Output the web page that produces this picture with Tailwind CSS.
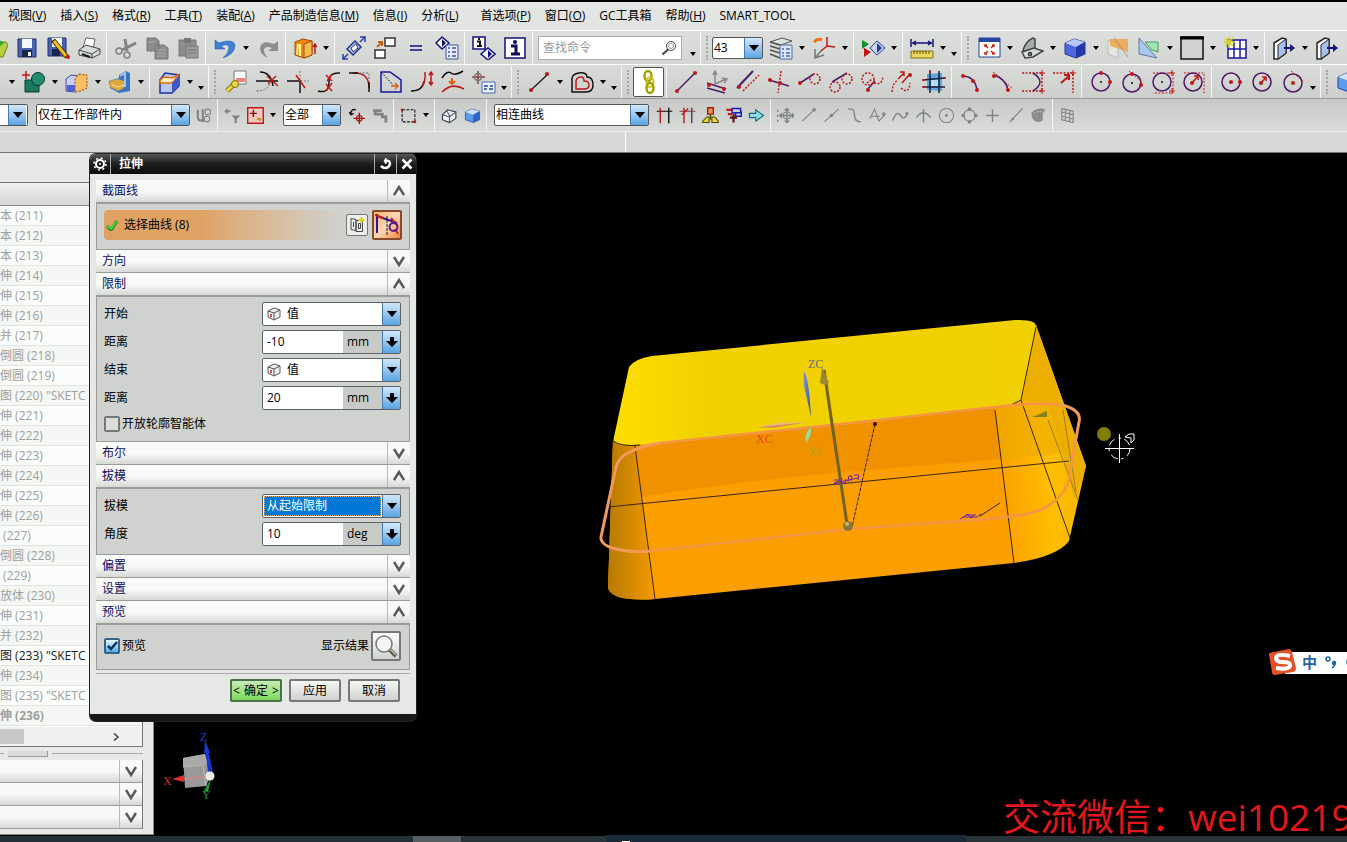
<!DOCTYPE html>
<html lang="zh-CN">
<head>
    <meta charset="UTF-8">
    <meta name="viewport" content="width=device-width, initial-scale=1.0">
    <title>拉伸</title>
    <script src="https://cdn.jsdelivr.net/npm/@tailwindcss/browser@4"></script>
</head>
<body class="h-screen flex flex-col overflow-hidden bg-black font-['Open_Sans','Noto_Sans_CJK_SC',sans-serif] text-xs text-black">

    <header class="shrink-0 overflow-hidden border-t-2 border-black bg-[#d6d9d6] whitespace-nowrap">
        <!-- Menu -->
        <nav class="flex h-7 items-center gap-3.5 bg-[#e2e5e2] pl-2 leading-6">
            <a href="#">视图(<u>V</u>)</a>
            <a href="#">插入(<u>S</u>)</a>
            <a href="#">格式(<u>R</u>)</a>
            <a href="#">工具(<u>T</u>)</a>
            <a href="#">装配(<u>A</u>)</a>
            <a href="#">产品制造信息(<u>M</u>)</a>
            <a href="#">信息(<u>I</u>)</a>
            <a href="#" class="mr-2">分析(<u>L</u>)</a>
            <a href="#">首选项(<u>P</u>)</a>
            <a href="#">窗口(<u>O</u>)</a>
            <a href="#">GC工具箱</a>
            <a href="#">帮助(<u>H</u>)</a>
            <a href="#">SMART_TOOL</a>
        </nav>

        <!-- Standard toolbar -->
        <div class="flex h-[34px] items-center border-t border-white bg-linear-to-b from-[#dcdfdc] to-[#d3d6d3]">
            <div class="-ml-5 flex items-center" data-tools="open save saveas print | cut copy paste | undo v redo | extrude v | iso boxes equals difflist | idiff info |"></div>
            <form class="mx-0.5 flex h-6 w-36 shrink-0 items-center border border-[#aaadaa] bg-white pr-1" role="search">
                <input type="search" aria-label="查找命令" placeholder="查找命令" class="min-w-0 flex-1 pl-1 placeholder-[#999] outline-none">
                <svg class="size-4" viewBox="0 0 16 16" fill="none" stroke="#444"><circle cx="10" cy="6" r="4.500"/><circle cx="10" cy="6" r="2.500" stroke="#999"/><path d="M7 9.500 1.500 14.500" stroke-width="2"/></svg>
            </form>
            <div class="flex items-center" data-tools="gap o | :"></div>
            <label class="flex h-[22px] w-[51px] shrink-0 overflow-hidden rounded-xs border border-[#555] bg-white">
                <select aria-label="工作图层" class="w-8 appearance-none pl-px outline-none"><option>43</option></select>
                <span data-arrow="combo"></span>
            </label>
            <div class="ml-0.5 flex items-center" data-tools="layers v csys v | play v | ruler v o | : fit v shade v cube v clip section v frame v grid v | door v door greenbar"></div>
        </div>

        <!-- Feature and curve toolbar -->
        <div class="flex h-[34px] items-center border-t border-white bg-linear-to-b from-[#d8dbd8] to-[#cccfcc]">
            <div class="flex items-center pl-1.5" data-tools="v datum v block v draft v | shell v o | : wrench trimA trimB trimC fillet chamfer offset project point o | : line v profile v o | : chain | segment axes parallel cross tan1 tan2 tan3 tan4 mesh | arc1 arc2 arc3 arc4 | circ1 circ2 circ3 circ4 | circ5 circ6 circ7 o | : slab"></div>
        </div>

        <!-- Selection bar -->
        <div class="flex h-[33px] items-center border-t border-[#999c99] bg-linear-to-b from-[#c6c9c6] to-[#d9dcd9]">
            <label class="flex h-[22px] w-7 shrink-0 overflow-hidden rounded-r-xs border border-l-0 border-[#555] bg-white">
                <select aria-label="类型过滤器" class="w-2 appearance-none outline-none"><option></option></select>
                <span data-arrow="combo"></span>
            </label>
            <label class="ml-2 flex h-[22px] w-[154px] shrink-0 overflow-hidden rounded-xs border border-[#555] bg-white">
                <select aria-label="选择范围" class="min-w-0 flex-1 appearance-none pl-px outline-none"><option>仅在工作部件内</option></select>
                <span data-arrow="combo"></span>
            </label>
            <div class="flex items-center pl-0.5" data-small data-tools="gchain | funnel snapbox v"></div>
            <label class="ml-1 flex h-[22px] w-[58px] shrink-0 overflow-hidden rounded-xs border border-[#555] bg-white">
                <select aria-label="细节过滤" class="min-w-0 flex-1 appearance-none pl-px outline-none"><option>全部</option></select>
                <span data-arrow="combo"></span>
            </label>
            <div class="flex items-center pl-1" data-small data-tools="snapto hook | marquee v | wirecube slab |"></div>
            <label class="ml-1 flex h-[22px] w-[155px] shrink-0 overflow-hidden rounded-xs border border-[#555] bg-white">
                <select aria-label="曲线规则" class="min-w-0 flex-1 appearance-none pl-px outline-none"><option>相连曲线</option></select>
                <span data-arrow="combo"></span>
            </label>
            <div class="flex items-center pl-1" data-small data-tools="stopA stopB tree flow arrow | move g1 g2 g3 g4 g5 g6 g7 g8 g9 g10 g11 | g12"></div>
        </div>

        <!-- Cue and status line -->
        <div class="flex h-[22px] border-t border-b border-t-[#eceeec] border-b-[#777] bg-[#d6d9d6]">
            <div class="w-[626px] border-r border-white"></div>
        </div>
    </header>

    <main class="relative flex min-h-0 flex-1">
        <!-- Part navigator -->
        <aside class="flex w-[154px] shrink-0 flex-col overflow-hidden border-r border-b border-[#888] bg-[#e6e9e6]">
            <div class="mr-2.5 h-[30px] shrink-0 border-b border-[#777]"></div>
            <div class="mr-2.5 h-[23px] shrink-0 border-b border-[#888] bg-linear-to-b from-[#f0f2f0] to-[#d4d7d4]"></div>
            <ul id="history" class="mr-2.5 h-[521px] shrink-0 overflow-hidden border-r border-[#777] bg-[#fbfdfb] whitespace-nowrap text-[#9da09d]"></ul>
            <div class="mr-2.5 flex h-5 shrink-0 items-center border-r border-b border-[#777] bg-[#eff1ef]">
                <div class="h-[15px] w-6 bg-[#c6c8c6]"></div>
                <svg class="mr-[22px] ml-auto size-2" viewBox="0 0 8 8" fill="none" stroke="#444" stroke-width="1.600"><path d="M2 .5 6 4 2 7.500"/></svg>
            </div>
            <div class="mr-2.5 flex h-[13px] shrink-0 items-center gap-1">
                <div class="h-px w-1 bg-[#aaa]"></div>
                <div class="h-1.5 w-10 border-r border-b border-[#999] bg-[#dadcda]"></div>
                <div class="h-px flex-1 bg-[#aaa]"></div>
            </div>
            <div class="mr-2.5 flex flex-col border-r border-[#777]">
                <button class="flex h-[23px] items-center justify-end" aria-label="相关性" data-panel></button>
                <button class="flex h-[23px] items-center justify-end" aria-label="细节" data-panel></button>
                <button class="flex h-[23px] items-center justify-end" aria-label="预览面板" data-panel></button>
            </div>
        </aside>

        <!-- Graphics window -->
        <section class="relative min-w-0 flex-1 overflow-hidden bg-black">
            <svg class="absolute top-0 left-0 h-[682px] w-[1193px]" viewBox="154 153 1193 682" fill="none">
                <defs>
                    <linearGradient id="leftCorner"><stop offset="0" stop-color="#b87900"/><stop offset=".3" stop-color="#c98300"/><stop offset="1" stop-color="#f69a00"/></linearGradient>
                    <linearGradient id="rightCorner" x1="0" x2="1" y1=".2" y2="0"><stop offset="0" stop-color="#fca200"/><stop offset=".5" stop-color="#ffbe00"/><stop offset="1" stop-color="#f2b400"/></linearGradient>
                    <linearGradient id="topFace"><stop offset="0" stop-color="#ffde00"/><stop offset=".2" stop-color="#f1d200"/><stop offset="1" stop-color="#f0d000"/></linearGradient>
                    <linearGradient id="blueCone"><stop offset="0" stop-color="#7a98e8"/><stop offset="1" stop-color="#3c5490"/></linearGradient>
                </defs>
                <!-- Drafted body -->
                <path d="M613 440Q620 447 636 445L870 416 1000 400 1060 540 1014 563 655 599Q612 602 608 588Z" fill="#fb9e00"/>
                <path d="M613 440Q620 447 636 445L655 599Q612 602 608 588Z" fill="url(#leftCorner)"/>
                <path d="M995 404 1021 398 1036 325 1086 466 1069 541Q1057 557 1014 563Z" fill="url(#rightCorner)"/>
                <path d="M1021 400 1036 325 1086 466 1075 500 1050 408Z" fill="#eeb000"/>
                <path d="M636 445 870 416 995 402 1001 459 870 470Q740 480 641 497Z" fill="#f09200"/>
                <path d="M995 410 1050 404 1070 452 1001 459Z" fill="#e8a900" opacity=".5"/>
                <path d="M629 367Q634 359 652 356L1015 320Q1037 319 1036 327L1021 400 1011 406 870 420 650 444Q610 448 614 437Z" fill="url(#topFace)"/>
                <!-- Edges -->
                <g stroke="#3a2800" stroke-width="1">
                    <path d="M613 441Q622 447 640 445M635 446 655 599M608 507 1069 461M995 410 1014 563M1036 327 1021 400 1070 538M1021 400 1011 405"/>
                    <path d="M1048 420 1078 500M1063 410 1076 492" stroke="#a17c2c"/>
                    <path d="M875 424 852 527" stroke-dasharray="4 1"/>
                    <path d="m980 516 20-13"/>
                </g>
                <!-- Section curve -->
                <path d="M1062 405Q1082 410 1079 422L1075 444M650 551Q630 553 612 548 600 544 601 537L616 467Q619 458 626 454 640 446 660 443" stroke="#f29a5a" stroke-width="3"/>
                <path d="M660 443 870 421Q930 414 1005 406 1040 402 1062 405M1075 444 1069 480Q1060 508 1022 515 990 520 930 523L850 529 650 551" stroke="#f59644" stroke-width="2.500"/>
                <!-- Direction handle and work axes -->
                <path d="M824 370 847 524" stroke="#716224" stroke-width="3"/>
                <path d="m822 367 7 16-4 2-5-2Z" fill="#9a8636"/>
                <circle cx="848" cy="526" r="5" fill="#8a7838"/><circle cx="847" cy="524" r="2" fill="#c8b878"/>
                <circle cx="875" cy="424" r="2" fill="#400"/>
                <path d="M804 371q5 8 7 46l-4-18q-5-17-3-28Z" fill="url(#blueCone)"/>
                <path d="m757 427 51-5-35 6Z" fill="#d98963"/><path d="m757 427 51-5-30 1Z" fill="#ecb48c"/>
                <path d="m811 427q1 8-5 16-2-9 5-16Z" fill="#8fe0a0"/>
                <path d="m1032 417 15-6v6Z" fill="#88801c"/>
                <g stroke="#7020b0"><path d="M834 480h5l-5 4h6M842 478l-1 5h4l1-4M848 482l1-6h3l-1 5M854 475h5l-1 5M834 483l24-5"/><path d="m960 519 8-5 3 4 5-4M963 517h14l4-3M966 515h8"/></g>
                <g font-family="Liberation Serif, serif" font-size="12">
                    <text x="808" y="368" fill="#6b6788">ZC</text>
                    <text x="756" y="443" fill="#e04a12">XC</text>
                    <text x="808" y="455" fill="#a4a418">Yc</text>
                </g>
                <!-- Cursor -->
                <circle cx="1104" cy="434" r="7" fill="#7f8000"/>
                <g stroke="#fff"><path d="M1105 448.500h29M1119.500 434v29"/><circle cx="1119.500" cy="448.500" r="10.500" stroke-dasharray="8 4 3 3"/><path d="m1125 437 4-3h5v6l-3 3v-5Z"/></g>
                <!-- View triad -->
                <path d="m183 758 22-4 6 21-5 11-21 2Z" fill="#999"/><path d="m183 758 22-4 3 10-25 3Z" fill="#aaa"/><path d="m183 767 20-2 3 21" stroke="#bbb"/>
                <path d="M184 779 206 777" stroke="#e77"/><path d="m172 779 12-4v7Z" fill="#e03030"/>
                <path d="m206 745 6 28h-3Z" stroke="#1838d0" stroke-width="2"/><path d="m205 740 5 13h-6Z" fill="#1838d0"/>
                <path d="m211 778-3 14-4-1Z" fill="#20a030"/><circle cx="210" cy="776" r="4.500" fill="#e8eee8"/>
                <g font-family="Liberation Serif, serif" font-size="12">
                    <text x="200" y="741" fill="#2038d8">Z</text>
                    <text x="163" y="785" fill="#d02838">X</text>
                    <text x="202" y="799" fill="#20902c">Y</text>
                </g>
            </svg>

            <!-- Input method bar -->
            <div class="absolute top-[495px] right-0 flex h-7 w-[79px] items-center text-[#1f66a8]">
                <div class="absolute top-1 right-0 h-[22px] w-[62px] bg-white"></div>
                <svg class="relative size-7 shrink-0" viewBox="0 0 28 28"><path d="m1 5 20-4q2 0 3 3l4 16q0 3-3 4L7 27q-3 0-3-3L1 7Z" fill="#e2502a"/><path d="M22 8Q9 5 8 10q0 4 7 4 8 0 7 4-2 4-14 2" fill="none" stroke="#fff" stroke-width="4"/></svg>
                <span class="relative ml-1.5 text-[15px] font-bold">中</span>
                <svg class="relative ml-2 h-4 w-6 shrink-0" viewBox="0 0 24 16" fill="none" stroke="#1f66a8" stroke-width="1.500"><circle cx="3" cy="5" r="2"/><circle cx="9" cy="9" r="1.500" fill="#1f66a8"/><path d="M10 9q0 3-3 5M24 3q-4 5 0 10"/></svg>
            </div>

            <p class="absolute bottom-0 left-[849px] text-[37px] leading-9 whitespace-nowrap text-[#e3171b]">交流微信：wei10219</p>
        </section>

        <!-- Extrude dialog -->
        <form class="absolute top-px left-[90px] flex w-[326px] flex-col rounded-t-md rounded-b-md border-b-[7px] border-[#151817] bg-[#e6e8e6] shadow-[0_0_0_1px_#222]" role="dialog" aria-label="拉伸">
            <div class="flex h-5 items-center rounded-t-md bg-linear-to-b from-[#555856] via-[#1b1e1c] to-[#0c0e0d] text-white">
                <svg class="mx-[3px] size-3.5" viewBox="0 0 14 14" fill="none" stroke="#fff"><circle cx="7" cy="7" r="4" stroke-width="2"/><circle cx="7" cy="7" r="6" stroke-width="1.500" stroke-dasharray="2 2.700"/><circle cx="7" cy="7" r="1" fill="#fff" stroke="none"/></svg>
                <h2 class="flex-1 border-l border-[#aaa] pl-2 leading-5 font-bold">拉伸</h2>
                <button type="button" aria-label="重置" class="flex h-5 w-[22px] items-center justify-center border-l border-[#aaa]"><svg class="size-3" viewBox="0 0 12 12" fill="none" stroke="#fff" stroke-width="2.500"><path d="M6 3q4-1 4 3-1 4-5 4-2 0-4-2"/><path d="M6 0v6L4 3Z" fill="#fff" stroke-width="1"/></svg></button>
                <button type="button" aria-label="关闭" class="flex h-5 w-5 items-center justify-center border-l border-[#aaa]"><svg class="size-3" viewBox="0 0 12 12" fill="none" stroke="#fff" stroke-width="2.500"><path d="m1.500 1.500 9 9M10.500 1.500l-9 9"/></svg></button>
            </div>

            <div class="mx-1.5 mt-1.5 flex flex-col">
                <button type="button" class="flex h-[23px] items-center justify-between text-[#0c0c64]" data-panel="open">截面线</button>
                <div class="flex h-[47px] items-center gap-1 border border-[#9a9d9a] bg-[#cfd2cf] px-[7px] pb-1">
                    <div class="flex h-[30px] flex-1 items-center gap-1 rounded-sm bg-linear-to-r from-[#dfa263] from-40% to-[#cfd2cf]">
                        <svg class="ml-0.5 size-3" viewBox="0 0 12 12" fill="none"><path d="m1 7 4 4 6-9" stroke="#167a16" stroke-width="3"/><path d="m1 7 4 3 6-8" stroke="#3cd83c" stroke-width="2"/></svg>
                        <span class="pl-0.5">选择曲线 (8)</span>
                    </div>
                    <button type="button" aria-label="绘制截面" class="flex size-[22px] items-center justify-center rounded-xs border border-[#777] bg-[#eceeec]"><svg class="size-4" viewBox="0 0 16 16" fill="none" stroke="#444"><path d="M2 1.500l5 1v11l-5-1ZM7 3.500h6.500v11H7ZM4.500 5v5M9.500 6.500h2v5h-2Z"/><path d="M12.500 0v6M9.500 3h6" stroke="#d4d420" stroke-width="2"/></svg></button>
                    <button type="button" aria-label="曲线" class="flex size-[30px] items-center justify-center rounded-xs border-2 border-[#8a4a2a] bg-linear-to-br from-[#ffb070] via-[#fbd8b8] to-[#f08838]"><svg class="size-6" viewBox="0 0 24 24" fill="none"><path d="M2 1v19M2 3l20 7" stroke="#2a1a90" stroke-width="2"/><path d="M0 2l8 3M16 5l6 7M20 16l3 5" stroke="#d02010" stroke-width="2"/><path d="M12 3v20" stroke="#222" stroke-dasharray="3 1"/><circle cx="18.500" cy="14" r="4" stroke="#5a1a90" stroke-width="2"/></svg></button>
                </div>
                <button type="button" class="flex h-[23px] items-center justify-between text-[#0c0c64]" data-panel>方向</button>
                <button type="button" class="flex h-[23px] items-center justify-between text-[#0c0c64]" data-panel="open">限制</button>
                <div class="flex h-[146px] flex-col gap-1 border border-[#9a9d9a] bg-[#cfd2cf] pt-[5px] pr-2 pl-[7px]">
                    <div class="flex h-6 items-center justify-between">
                        <label for="startType">开始</label>
                        <div class="flex h-6 w-[139px] items-center overflow-hidden rounded-xs border border-[#5d6468] bg-white">
                            <span data-value-icon></span>
                            <select id="startType" class="min-w-0 flex-1 appearance-none outline-none"><option>值</option></select>
                            <span data-arrow="combo"></span>
                        </div>
                    </div>
                    <div class="flex h-6 items-center justify-between">
                        <label for="startDistance">距离</label>
                        <div class="flex h-6 w-[139px] items-center overflow-hidden rounded-xs border border-[#5d6468] bg-[#c8cac8]">
                            <input id="startDistance" type="text" value="-10" class="h-full w-20 bg-white pb-0.5 pl-1 outline-none">
                            <span class="flex-1 pl-1">mm</span>
                            <span data-arrow="menu"></span>
                        </div>
                    </div>
                    <div class="flex h-6 items-center justify-between">
                        <label for="endType">结束</label>
                        <div class="flex h-6 w-[139px] items-center overflow-hidden rounded-xs border border-[#5d6468] bg-white">
                            <span data-value-icon></span>
                            <select id="endType" class="min-w-0 flex-1 appearance-none outline-none"><option>值</option></select>
                            <span data-arrow="combo"></span>
                        </div>
                    </div>
                    <div class="flex h-6 items-center justify-between">
                        <label for="endDistance">距离</label>
                        <div class="flex h-6 w-[139px] items-center overflow-hidden rounded-xs border border-[#5d6468] bg-[#c8cac8]">
                            <input id="endDistance" type="text" value="20" class="h-full w-20 bg-white pb-0.5 pl-1 outline-none">
                            <span class="flex-1 pl-1">mm</span>
                            <span data-arrow="menu"></span>
                        </div>
                    </div>
                    <label class="flex h-5 items-center gap-0.5"><input type="checkbox" class="size-4 appearance-none rounded-xs border-2 border-[#777] bg-[#dcdedc]">开放轮廓智能体</label>
                </div>
                <button type="button" class="flex h-[23px] items-center justify-between text-[#0c0c64]" data-panel>布尔</button>
                <button type="button" class="flex h-[23px] items-center justify-between text-[#0c0c64]" data-panel="open">拔模</button>
                <div class="flex h-[67px] flex-col gap-1 border border-[#9a9d9a] bg-[#cfd2cf] pt-[5px] pr-2 pl-[7px]">
                    <div class="flex h-6 items-center justify-between">
                        <label for="draftType">拔模</label>
                        <div class="flex h-6 w-[139px] items-center overflow-hidden rounded-xs border border-[#5d6468] bg-white">
                            <select id="draftType" class="m-px h-5 min-w-0 flex-1 appearance-none border border-dotted border-[#e8b070] bg-[#0078d7] pl-0.5 text-white outline-none"><option>从起始限制</option></select>
                            <span data-arrow="combo"></span>
                        </div>
                    </div>
                    <div class="flex h-6 items-center justify-between">
                        <label for="draftAngle">角度</label>
                        <div class="flex h-6 w-[139px] items-center overflow-hidden rounded-xs border border-[#5d6468] bg-[#c8cac8]">
                            <input id="draftAngle" type="text" value="10" class="h-full w-20 bg-white pb-0.5 pl-1 outline-none">
                            <span class="flex-1 pl-1">deg</span>
                            <span data-arrow="menu"></span>
                        </div>
                    </div>
                </div>
                <button type="button" class="flex h-[23px] items-center justify-between text-[#0c0c64]" data-panel>偏置</button>
                <button type="button" class="flex h-[23px] items-center justify-between text-[#0c0c64]" data-panel>设置</button>
                <button type="button" class="flex h-[23px] items-center justify-between text-[#0c0c64]" data-panel="open">预览</button>
                <div class="flex h-[46px] items-center border border-[#9a9d9a] bg-[#cfd2cf] pr-2 pb-0.5 pl-[7px]">
                    <label class="flex flex-1 items-center gap-0.5">
                        <span class="relative flex">
                            <input type="checkbox" checked class="size-4 appearance-none rounded-xs border-2 border-[#3a6288] bg-linear-to-b from-[#e8f4fc] to-[#48b0ec]">
                            <svg class="pointer-events-none absolute inset-0 size-4" viewBox="0 0 16 16" fill="none" stroke="#103058" stroke-width="2.500"><path d="m4 8 3 3 6-7"/></svg>
                        </span>
                        预览
                    </label>
                    <label for="showResult">显示结果</label>
                    <button type="button" id="showResult" class="ml-0.5 flex size-[30px] items-center justify-center rounded-xs border-2 border-[#777] bg-linear-to-b from-white to-[#cfd2cf]"><svg class="size-6" viewBox="0 0 24 24" fill="none"><path d="m15 15 7 7" stroke="#555" stroke-width="4"/><path d="m16 15 6 6" stroke="#c8c090" stroke-width="1.500"/><circle cx="10" cy="10" r="8" fill="#f4f6f4" stroke="#777" stroke-width="1.500"/></svg></button>
                </div>
            </div>
            <div class="mx-1.5 mt-[3px] border-t border-[#aaa]"></div>
            <div class="mt-[5px] mr-4 mb-3 flex justify-end gap-[7px] leading-5">
                <button type="submit" class="flex h-[23px] w-[52px] items-center justify-between rounded-xs border-2 border-[#4c704c] bg-linear-to-b from-[#c4ecb4] to-[#7cd858] px-px"><span>&lt;</span><span>确定</span><span>&gt;</span></button>
                <button type="button" class="flex h-[23px] w-[52px] items-center justify-center rounded-xs border-2 border-[#777] bg-linear-to-b from-[#f6f8f6] to-[#cfd2cf]">应用</button>
                <button type="button" class="flex h-[23px] w-[52px] items-center justify-center rounded-xs border-2 border-[#777] bg-linear-to-b from-[#f6f8f6] to-[#cfd2cf]">取消</button>
            </div>
        </form>
    </main>

    <!-- Taskbar -->
    <footer class="flex h-[7px] shrink-0 items-end bg-black">
        <div class="h-1.5 w-[413px] bg-[#233038]"></div>
        <div class="h-1.5 w-12 bg-[#566063]"></div>
        <div class="h-1.5 w-[145px] bg-[#28343a]"></div>
        <div class="flex h-[7px] w-[360px] items-end overflow-hidden bg-[#1b2a38]"><div class="ml-4 h-px w-2 bg-white"></div></div>
        <div class="h-1.5 flex-1 bg-[#28343a]"></div>
    </footer>

    <script>
        const dot = (x, y) => `<circle cx="${x}" cy="${y}" r="2" fill="#c01818" stroke="none"/>`;
        const path = (d, color, width = 1.5, more = '') => `<path d="${d}" stroke="${color}" stroke-width="${width}" ${more}/>`;
        const ring = (x, y, r, color = '#4c1a68', more = '') => `<circle cx="${x}" cy="${y}" r="${r}" stroke="${color}" stroke-width="1.5" ${more}/>`;
        const dash = 'stroke-dasharray="2 1.500"';
        const cube = (l, t, r) => `<path d="m2 7 9-4 11 3v12l-9 4-11-4Z" fill="${l}" stroke="#2c3c90"/><path d="m2 7 9-4 11 3-9 5Z" fill="${t}"/><path d="m13 11 9-5v12l-9 4Z" fill="${r}"/>`;
        const RED = '#c01818', PURPLE = '#4c1a68', NAVY = '#12127a', GREY = '#808380';

        const icons = {
            open: `<path d="M10 6h12l2 3-5 12H8Z" fill="#b8d040" stroke="#708020"/><path d="m12 2 8 5-4 3Z" fill="#30a030"/>`,
            save: `<path d="M3 3h18v18H3Z" fill="#4a62b0" stroke="#20306c"/><path d="M7 3h10v9H7Z" fill="#f4f8ff"/><path d="M7 14h10v7H7Z" fill="#18244c"/><path d="M13 16h3v4h-3Z" fill="#fff"/>`,
            saveas: `<path d="M2 2h18v18H2Z" fill="#4a62b0" stroke="#20306c"/><path d="M6 2h10v9H6Z" fill="#f4f8ff"/><path d="M6 13h8v7H6Z" fill="#18244c"/>${path('m7 4 14 17', '#403000', 5)}${path('m8 5 12 15', '#f0c020', 3)}${dot(22, 21)}`,
            print: `<path d="m9 2 9 1-2 10-10-2Z" fill="#fff" stroke="#666"/><path d="m2 14 7-5 14 4v5l-8 4L2 19Z" fill="#d8dcd8" stroke="#444"/><path d="m2 14 13 4 8-5M15 18v4" stroke="#444"/><path d="m5 18 8 3" stroke="#222" stroke-width="2"/>`,
            cut: `${path('M11 3l2 12M22 7 8 14', GREY, 3)}${ring(5, 15, 3, GREY, 'stroke-width="2"')}${ring(13, 19, 3, GREY)}`,
            copy: `<path d="M2 2h9l3 3v10H2ZM10 9h9l4 3v11H10Z" fill="#8b8e8b" stroke="#777"/>${path('M12 14h8M12 17h8M12 20h8M4 6h6', '#aaadaa', 1)}`,
            paste: `<path d="M3 4h17v16H3Z" fill="#8b8e8b" stroke="#777"/><path d="M8 2h7v5H8Z" fill="#777"/><path d="M10 10h12v12H10Z" fill="#999c99" stroke="#777"/>${path('M12 14h8M12 17h8', '#777', 1)}`,
            undo: `<path d="M2 4v9h10l-4-3q7-3 8 1 0 6-6 11 12-4 12-13Q20 2 6 7Z" fill="#3c80d8" stroke="#2050a0" stroke-width=".5"/>`,
            redo: `<path d="M22 5v10H12l4-3q-7-3-8 2 0 4 4 8-8-3-8-10 2-9 14-4Z" fill="#8b8e8b"/>`,
            extrude: `<path d="m2 6 8-3 9 2v14l-8 3-9-3Z" fill="#f08a10" stroke="#a04c00"/><path d="M11 8v14l8-3V5Z" fill="#f8b850" stroke="#a04c00"/><path d="m5 8-1 11M7 8v12" stroke="#fff0a0" stroke-width="2"/>${path('M22 18V9M20 11l2-3 2 3', RED)}`,
            iso: `<path d="m5 13 8-8 6 6-8 8Z" fill="#b8ccdc" stroke="#24348c" stroke-width="1.500"/><path d="m9 12 5-4 2 4-5 4Z" fill="#fff" stroke="#24348c"/>${path('M18 6l5-5M18 1h5v5M6 18l-5 5M1 18v5h5', '#2c3cae')}`,
            boxes: `<path d="M12 2h10v8H12ZM2 14h10v8H2Z" fill="#fff" stroke="#333" stroke-width="1.500"/>${path('M4 11l4-4M5 6h4v4', '#d06010', 2)}`,
            equals: path('M6 10h12M6 14h12', NAVY, 1.5),
            difflist: `<path d="m1 7 6-6 7 6-7 6Z" fill="#fff" stroke="${NAVY}" stroke-width="1.500"/><path d="M7 3v8l4-4Z" fill="${NAVY}"/><path d="M11 9h12v14H11Z" fill="#e8ecff" stroke="#4050a8"/>${path('M13 12h2M17 12h4M13 16h2M17 16h4M13 20h2M17 20h4', '#4050a8')}`,
            idiff: `<path d="M1 1h12v12H1Z" fill="#fff" stroke="${NAVY}" stroke-width="1.500"/>${path('M5 5.500h3v4.500M5 10h5M7 2v2', '#111', 2)}<path d="m9 18 7-6 7 6-7 6Z" fill="#fff" stroke="${NAVY}" stroke-width="1.500"/><path d="M16 14v8l4-4Z" fill="${NAVY}"/>`,
            info: `<path d="M2 2h20v20H2Z" fill="#fff" stroke="${NAVY}" stroke-width="1.500"/>${path('M8 10h5v8M8 18h9', '#0c0c50', 3)}<circle cx="12" cy="6" r="2" fill="#0c0c50"/>`,
            layers: `<path d="m1 6 12-4 10 3-11 4Z" fill="#dce4dc" stroke="#555"/>${path('m1 10 10 3M1 14l10 3M1 18l10 4M1 6l10 3', '#555')}<path d="M11 9h12v14H11Z" fill="#dce8fa" stroke="#4868b0"/>${path('M13 13h2M17 13h4M13 17h2M17 17h4M13 20h2M17 20h4', '#4868b0')}`,
            csys: `${path('M3 13v9l9-3M3 22l6-7', '#777')}${path('M15 10V1M15 10l8 1M15 10l-6 5', RED)}${path('M2 6q4-4 8-2', '#f07010', 3)}`,
            play: `<path d="m1 4 7 4-7 5Z" fill="#108c30"/><path d="m3 12 7 4-7 5Z" fill="#c01010"/><path d="m9 12 7-7 8 7-8 7Z" fill="#c8d8f0" stroke="#28389c"/><path d="M16 7v10l5-5Z" fill="#28389c"/>`,
            ruler: `${path('M1 3v8M23 3v8M2 7h20M6 5 3 7l3 2M18 5l3 2-3 2', NAVY)}<path d="M1 15h22v7H1Z" fill="#ecd860" stroke="#807010"/>${path('M4 15v3M7 15v3M10 15v3M13 15v3M16 15v3M19 15v3', '#605000', 1)}`,
            fit: `<path d="M2 2h21v19H2Z" fill="#fff" stroke="#20409c"/><path d="M2 2h21v4H2Z" fill="#2448a0"/>${path('m11 12-3-3M8 11V9h2M14 12l3-3M15 9h2v2M11 15l-3 3M8 16v2h2M14 15l3 3M17 16v2h-2', '#d02818', 1.5)}`,
            shade: `<path d="M3 14Q6 5 13 2l2 1v10l-7 5Z" fill="#a8aca8" stroke="#444" stroke-width="1.500"/><path d="m2 16 12-4 9 3-10 6-8 1Z" fill="#d8dcd8" stroke="#444" stroke-width="1.500"/>${ring(10, 18, 1.5, '#333')}`,
            cube: cube('#4c68e0', '#b8c8f8', '#2438a8'),
            clip: `<path d="M2 4 12 8v14L2 18Z" fill="#e4e8e4" stroke="#bbb"/><path d="M4 3h18v13l-18-6Z" fill="#f0a040" opacity=".8"/><path d="m8 2 14 19" stroke="#a89880"/>`,
            section: `<path d="M2 2 20 22 2 18Z" fill="#a8c8ec" stroke="#5878a8"/><path d="M8 6h13v10l-6-2Z" fill="#a0e4b0" stroke="#40a060"/>`,
            frame: `<path d="M1 1h22v22H1Z" fill="#cfd2cf" stroke="#111" stroke-width="1.500"/>${path('M0 2h24', '#000', 3)}`,
            grid: `<path d="M5 4h18v18H5Z" fill="#fff"/>${path('M5 4h18v18H5ZM11 4v18M17 4v18M5 13h18', '#1818a0')}${path('M6 1v11M1 6h11M2 2l8 8M10 2l-8 8', '#d8d020', 1.5)}`,
            door: `<path d="m2 7 8-5 4 1v14l-8 6H2Z" fill="#fff" stroke="#222" stroke-width="1.500"/><path d="m6 9 8-6v14l-8 6Z" fill="#a8c0f0" stroke="#222"/>${path('M12 12h8', NAVY, 2)}<path d="m18 8 5 4-5 4Z" fill="${NAVY}"/>`,
            greenbar: `<path d="M4 5h8v8H4Z" fill="#18a040"/><path d="M4 14h8v3H4Z" fill="#c04020"/>`,
            datum: `${path('M4 1v8M0 5h8', RED)}<path d="M3 10h14v12H3Z" fill="#187860" stroke="#083828"/><circle cx="16" cy="9" r="6.500" fill="#208c70" stroke="#083828"/>`,
            block: `<path d="m1 9 5-4 8 1v13l-4 3-9-1Z" fill="#c8d0f4" stroke="#4048a0"/><path d="m14 4 8 1v13l-6 3-6 1V9Z" fill="#f8c060" stroke="#b03000" ${dash}/><path d="M2 15h8v6H2Z" fill="#5060d0"/>`,
            draft: `<path d="m1 11 10-3V5l7-4 4 2v18l-11 2-9-5Z" fill="#3c74c4"/><path d="m2 11 8-2 6 2v7l-6 3-8-4Z" fill="#e0a838"/><path d="m4 15 6 2 6-2" stroke="#f8e0a0"/><path d="m12 6 5-3v14" stroke="#a0c8f0" stroke-width="2"/>`,
            shell: `<path d="m3 10 5-7 14 2v11l-7 7H3Z" fill="#b8c8f4" stroke="#20309c" stroke-width="1.500"/><path d="M3 11q2-4 6-4l6 1 6-3-4 6-3 2H3Z" fill="#fff0c0" stroke="#e07010" stroke-width="1.500"/><path d="M15 13v10l7-7V6Z" fill="#4058c8"/>`,
            wrench: `<path d="M10 1h12v13H10Z" fill="#fff" stroke="#778"/><path d="M12 8h9v4h-9Z" fill="#f08080"/>${path('M3 21 10 14', '#807010', 5)}${path('M3 21 10 14', '#ecd840', 3)}<circle cx="11" cy="14" r="3.500" fill="#ecd840" stroke="#807010"/>`,
            trimA: `${path('M1 11h22M5 2q11 0 13 14', '#111')}${path('m12 6 11 10M21 6l-8 8', RED)}${path('M15 14q-3 7-14 7', '#666', 1, dash)}`,
            trimB: `${path('M1 11h13v12', '#111')}${path('M14 1v10h9', '#777', 1, dash)}${path('m10 5 9 13', RED)}`,
            trimC: `${path('M1 21q11 3 11-9 0-10 11-9', '#111')}${path('m9 5 6 6M15 4l-5 7M9 14l6 7M15 13l-6 8', RED)}`,
            fillet: `${path('M5 3q16-1 16 15', RED)}${path('M1 3h9M21 12v10', '#111')}${path('M11 3h10v8', '#666', 1, dash)}`,
            chamfer: `<path d="M2 2h9l11 8v12H2Z" stroke="#1818a0" stroke-width="1.500"/>${path('M2 2l14 15', '#111', 1, dash)}${path('M12 16h7M16 13l3 3-3 3', '#e06010')}`,
            offset: `${path('M1 21q12 0 13-10', '#111')}${path('M11 17q5-4 4-15M21 3v11M19 5l2-3 2 3M19 12l2 3 2-3', RED)}`,
            project: `${path('M1 8q5-8 9-5t12-2', '#111')}${path('M1 22q10-10 22-3', RED)}${path('M11 8v5M8 11l3 3 3-3', '#e06010', 2)}`,
            point: `${path('M6 1v13M0 7h13', '#864040')}${ring(6, 7, 3.5, '#777')}<path d="M10 12h13v11H10Z" fill="#eaf0ff" stroke="#4868b0"/>${path('M12 16h4M18 16h3M12 19h3M17 19h4', '#20409c')}`,
            line: `${path('M3 21 21 4', '#222')}${dot(4, 20)}${dot(20, 4)}`,
            profile: `<path d="M2 22V9q0-5 7-6 8-1 8 4 6 0 6 8 0 7-7 7Z" stroke="#111" stroke-width="1.500"/><path d="M6 19V11q1-4 5-4 3 0 3 4 5 0 5 4t-5 4Z" stroke="${RED}" stroke-width="1.500"/>`,
            chain: `<g fill="none"><ellipse cx="11" cy="6" rx="3.500" ry="5" stroke="#a0a000" stroke-width="2.500"/><ellipse cx="13" cy="12" rx="3.500" ry="5" stroke="#c8c818" stroke-width="2"/><ellipse cx="13" cy="18" rx="3.500" ry="5" stroke="#a0a000" stroke-width="2.500"/></g>`,
            segment: `${path('M3 21 21 3', PURPLE)}${dot(3, 21)}${dot(21, 3)}`,
            axes: `${path('M10 14V2M8 5l2-4 2 4M10 14l11-5M17 8l5 1-3 4', '#888')}${path('M2 13l19 6M2 18l18 5', PURPLE)}${dot(4, 15)}${dot(19, 19)}`,
            parallel: `${path('M1 18 17 1', PURPLE, 2)}${path('M7 21 23 5', RED, 1.5, dash)}${dot(3, 17)}`,
            cross: `${path('M14 1 11 23', RED, 1.5, dash)}${path('M2 10l20 6', PURPLE)}${dot(3, 10)}${dot(13, 13)}`,
            tan1: `${path('M2 13 16 4', PURPLE)}${ring(17, 9, 5, RED, dash)}${dot(2, 13)}`,
            tan2: `${path('M3 12 18 3', PURPLE)}${ring(18, 9, 5, RED, dash)}${ring(6, 17, 5, RED, dash)}`,
            tan3: `${path('M7 20 15 11', PURPLE)}${ring(8, 9, 6, RED, dash)}${path('M14 13q8 3 9-7M7 13l5-4', RED, 1.5, dash)}${dot(8, 20)}`,
            tan4: `${path('M11 13 18 5M7 9l6-6M9 2h4v4', RED)}${path('M1 22q1-11 6-11M10 18q8 7 9-5', RED, 1.5, dash)}${dot(19, 5)}`,
            mesh: `<path d="m5 4 15-1v18L5 20Z" fill="#64a4d8"/><path d="m9 10 7-1v7H9Z" fill="#b8dcf4"/>${path('M8 1v22M17 1v22M1 10l22-2M1 17h22', '#102040')}${path('M0 10h3M21 8h3M0 17h3M8 0v3', RED)}`,
            arc1: `${path('M3 6q13 0 15 14', PURPLE)}${dot(4, 6)}${dot(14, 11)}${dot(18, 20)}`,
            arc2: `${path('M4 5q12 4 14 15', PURPLE)}${path('M3 2l8 6M15 12l8 7', RED, 1, dash)}${dot(4, 6)}${dot(18, 20)}`,
            arc3: `${path('M1 3h20v18H1', RED, 1.5, dash)}${path('M12 3q14 9 0 18', PURPLE)}${path('M18 3h6M21 0v6M18 21h6M21 18v6', RED, 1)}`,
            arc4: `${path('M1 3h20v20', RED, 1.5, dash)}${path('m9 13 8-7M12 5h5v5', RED, 2)}${path('M18 3h6M21 0v6', RED, 1)}`,
            circ1: `${ring(12, 12, 9)}${dot(12, 3)}${dot(21, 12)}<circle cx="12" cy="12" r="1" fill="#111"/>`,
            circ2: `${ring(12, 13, 9)}${path('M9 1l13 11', RED, 1, dash)}${dot(12, 4)}${dot(21, 15)}<circle cx="12" cy="13" r="1" fill="#111"/>`,
            circ3: `${path('M2 3h20v20H2', RED, 1, dash)}${ring(11, 12, 9)}${path('M18 3h6M21 0v6M18 21h6M21 18v6', RED, 1)}<circle cx="11" cy="12" r="1" fill="#111"/>`,
            circ4: `${path('M2 3h20v20', RED, 1, dash)}${ring(11, 12, 9)}${path('m10 13 6-7M12 6h4v4', RED, 1.5)}${dot(10, 13)}`,
            circ5: `${ring(12, 12, 9)}${dot(12, 12)}${dot(21, 12)}`,
            circ6: `${ring(12, 12, 9)}${path('m11 13 5-6M12 7h4v4', RED, 1.5)}${dot(11, 13)}`,
            circ7: `${ring(12, 13, 9)}${path('M10 1l13 11', RED, 1, dash)}${dot(12, 13)}`,
            slab: cube('#5c9cec', '#d0e4fc', '#2c64c0'),
            gchain: `${path('M4 4v10q0 6 6 5M11 3v18', GREY, 3)}${ring(18, 7, 4, GREY)}${ring(17, 17, 4, GREY)}`,
            funnel: `${path('M1 6h8M4 3v6', GREY, 3)}<path d="M11 12h12l-5 5v6h-3v-6Z" fill="${GREY}"/>`,
            snapbox: `<path d="M1 1h22v22H1Z" fill="#f4c8c0" stroke="${RED}" stroke-width="2"/>${path('M9 4v10M4 9h10', '#801010', 2)}${path('m15 15 4 5M14 18q4-4 6 0', '#c89010', 2)}`,
            snapto: `${path('M4 10Q4 2 11 4M2 7l2 4 4-2', '#111', 2)}${ring(16, 16, 4, '#a01010')}${path('M16 8v16M8 16h16', '#a01010', 2)}`,
            hook: `${path('M3 5h12M6 5v5h9M16 8v6h5v8', GREY, 4)}`,
            marquee: `${path('M3 4h18v17H3Z', '#111', 1.5, 'stroke-dasharray="4 2"')}${dot(3, 4)}${dot(21, 21)}`,
            wirecube: `<path d="m2 11 7-7 12 3v9l-9 6-10-4Z" fill="#eef2fa" stroke="#334" stroke-width="1.500"/>${path('M2 11l10 3 9-7M12 14v8M8 5l5 9', '#556')}`,
            stopA: `${path('M1 6h22', '#111', 1.5)}${path('M6 1v22', RED, 2)}${path('M18 1v22', '#111', 2)}`,
            stopB: `${path('M1 6h22', '#884040', 1.5)}${path('M7 1v22M13 2l-9 9', RED, 2)}${path('M18 1v22', '#444', 2)}`,
            tree: `<path d="M8 1h8v9H8Z" fill="#f09060" stroke="#a02000" stroke-width="2"/><path d="m1 20 6-6h3v8H1ZM14 22v-8h4l5 6v2Z" fill="#e8d840" stroke="#504800" stroke-width="1.500"/>${path('M12 10v8', '#504800', 2)}`,
            flow: `${path('M2 4h9M4 10h6', RED, 3)}<path d="M10 2h12v6H10ZM15 8v5h8V6" stroke="#1818c0" stroke-width="2"/>${path('M12 10v12M7 15h10', '#601010', 3)}`,
            arrow: `<path d="M2 9h9V4l11 8-11 8v-5H2Z" fill="#90d8e8" stroke="#106878" stroke-width="1.500"/>`,
            move: `${path('M14 2v20M4 12h20M11 5l3-3 3 3M11 19l3 3 3-3M7 9l-3 3 3 3M21 9l3 3-3 3M1 4v3M1 11v3M1 18v3', GREY, 2)}${ring(14, 12, 5, GREY)}`,
            g1: `${path('M3 20 20 4', GREY)}<circle cx="20" cy="4" r="2.500" fill="${GREY}"/>`,
            g2: `${path('M2 21 22 3', GREY)}<circle cx="12" cy="12" r="2.500" fill="${GREY}"/>`,
            g3: path('M3 3q9-2 9 8t9 10', GREY, 2),
            g4: `${path('M1 17 8 3l6 17 8-9M3 13h12', GREY)}<circle cx="21" cy="10" r="2.500" fill="${GREY}"/>`,
            g5: `${path('M1 19Q7 4 12 12t10-3', GREY, 2)}<circle cx="21" cy="9" r="2" fill="${GREY}"/>`,
            g6: path('M12 3v19M2 15q10-14 20 0', GREY, 2),
            g7: `${ring(12, 12, 10, GREY)}<circle cx="12" cy="12" r="2" fill="${GREY}"/>`,
            g8: `${ring(12, 12, 8, GREY)}<g fill="${GREY}"><circle cx="12" cy="3" r="2.500"/><circle cx="12" cy="21" r="2.500"/><circle cx="3" cy="12" r="2.500"/><circle cx="21" cy="12" r="2.500"/></g>`,
            g9: path('M12 3v18M3 12h18', GREY, 2),
            g10: `${path('M4 21 22 2', GREY)}<circle cx="8" cy="17" r="2" fill="${GREY}"/>`,
            g11: `<path d="M2 8q8-8 20-5l-4 6v10q-6 4-10 1Q2 18 2 8Z" fill="#8b8e8b"/>${path('M5 9q6-4 12-2', '#aaa')}`,
            g12: path('M4 2l16 4v16L4 18ZM9 4v15M15 5v15M4 7l16 4M4 13l16 4', GREY)
        };

        document.querySelectorAll('[data-tools]').forEach((bar) => {
            const small = 'small' in bar.dataset;
            bar.classList.add('shrink-0');
            bar.innerHTML = bar.dataset.tools.split(' ').map((tool) => {
                if (tool === '|') return '<i class="mr-[3px] ml-0.5 h-8 w-px shrink-0 bg-white/80"></i>';
                if (tool === ':') return '<i class="mr-1 ml-0.5 h-6 shrink-0 border-l-2 border-dotted border-[#a4a7a4]"></i>';
                if (tool === 'gap') return '<i class="w-1 shrink-0"></i>';
                if (tool === 'v') return '<button class="flex h-6 w-3 shrink-0 items-center justify-center" aria-label="更多"><svg class="h-1 w-1.5" viewBox="0 0 6 4"><path d="M0 0h6L3 4Z"/></svg></button>';
                if (tool === 'o') return '<button class="flex h-6 w-2.5 shrink-0 items-end justify-center pb-1" aria-label="工具条选项"><svg class="h-1 w-1.5" viewBox="0 0 6 4"><path d="M0 0h6L3 4Z"/></svg></button>';
                const box = small ? 'flex w-[23px] shrink-0 justify-center'
                    : tool === 'chain' ? 'flex h-[30px] w-[31px] shrink-0 items-center justify-center rounded-xs border border-[#555] bg-white'
                    : 'flex w-[31px] shrink-0 justify-center';
                const size = small ? 'size-[17px]' : 'size-6';
                return `<button class="${box}" aria-label="${tool}"><svg class="${size}" viewBox="0 0 24 24" fill="none">${icons[tool]}</svg></button>`;
            }).join('');
        });

        // Blue drop-down ends of the combo and value fields
        document.querySelectorAll('[data-arrow]').forEach((el) => {
            el.className = 'pointer-events-none flex h-full w-[18px] shrink-0 items-center justify-center border-l border-[#4878a8] bg-linear-to-b from-[#d4e8fa] to-[#58a4e4]';
            el.innerHTML = el.dataset.arrow === 'combo'
                ? '<svg class="size-3" viewBox="0 0 12 12"><path d="M1 3h10L6 9Z"/></svg>'
                : '<svg class="size-3" viewBox="0 0 12 12"><path d="M4 1h4v4h4l-6 6-6-6h4Z"/></svg>';
        });

        document.querySelectorAll('[data-value-icon]').forEach((el) => {
            el.className = 'ml-1 mr-1.5 shrink-0';
            el.innerHTML = '<svg class="size-3.5" viewBox="0 0 14 14" stroke="#555" fill="#eee"><path d="m1 4 6-3 6 2v7l-6 3-6-3Z"/><path d="m1 4 6 2 6-3M7 6v7" fill="none"/><path d="M4 7v3" stroke="#d02020" stroke-width="1.500"/></svg>';
        });

        // Collapsible group headers
        document.querySelectorAll('[data-panel]').forEach((el) => {
            el.classList.add('border-b', 'border-[#999c99]', 'bg-linear-to-b', 'from-[#f8faf8]', 'from-50%', 'to-[#d6d9d6]', 'pl-1.5', 'shrink-0');
            const d = el.dataset.panel === 'open' ? 'M1 10 6 2l5 8' : 'M1 2l5 8 5-8';
            el.insertAdjacentHTML('beforeend', `<span class="flex h-full w-[23px] items-center justify-center border-l border-[#b8bab8]"><svg class="size-3" viewBox="0 0 12 12" fill="none" stroke="#5a5a5a" stroke-width="2.500"><path d="${d}"/></svg></span>`);
        });

        const history = [
            '本 (211)', '本 (212)', '本 (213)', '伸 (214)', '伸 (215)', '伸 (216)', '并 (217)', '倒圆 (218)', '倒圆 (219)',
            '图 (220) "SKETC', '伸 (221)', '伸 (222)', '伸 (223)', '伸 (224)', '伸 (225)', '伸 (226)', ' (227)', '倒圆 (228)',
            ' (229)', '放体 (230)', '伸 (231)', '并 (232)', '图 (233) "SKETC', '伸 (234)', '图 (235) "SKETC', '伸 (236)'
        ];
        const list = document.getElementById('history');
        history.forEach((name, i) => {
            const row = document.createElement('li');
            row.className = 'h-5 border-b border-[#e0e3e0] leading-5 whitespace-pre even:bg-[#f5f7f5]';
            if (i === 22) row.classList.add('text-[#222]');
            if (i === 25) row.classList.add('font-bold');
            row.textContent = name;
            list.append(row);
        });
    </script>
</body>
</html>
